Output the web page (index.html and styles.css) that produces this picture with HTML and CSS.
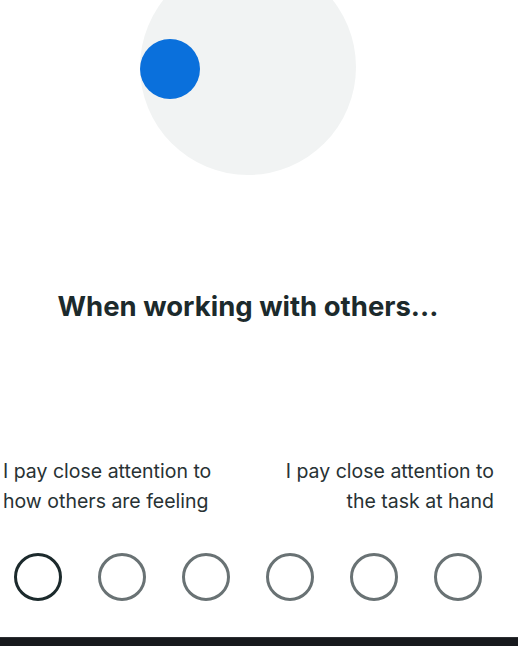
FILE: index.html
```html
<!DOCTYPE html>
<html>
<head>
  <title>Working style</title>
  <link rel="stylesheet" href="styles.css">
</head>
<body>
  <div class="screen">
    <!-- progress illustration -->
    <div class="hero">
      <div class="ring">
        <div class="dot"></div>
      </div>
    </div>

    <h1 class="question">When working with others...</h1>

    <div class="labels">
      <p class="label label-left">I pay close attention to<br>how others are feeling</p>
      <p class="label label-right">I pay close attention to<br>the task at hand</p>
    </div>

    <div class="scale">
      <button class="choice active"></button>
      <button class="choice"></button>
      <button class="choice"></button>
      <button class="choice"></button>
      <button class="choice"></button>
      <button class="choice"></button>
    </div>
  </div>
  <div class="navbar"></div>
</body>
</html>
```
FILE: styles.css
```css
html, body {
  margin: 0;
  padding: 0;
}

body {
  width: 518px;
  height: 646px;
  overflow: hidden;
  background: #fff;
  font-family: Inter, "Noto Sans", sans-serif;
  color: #1c2a2c;
}

.screen {
  width: 496px;
  height: 637px;
  display: flex;
  flex-direction: column;
  overflow: hidden;
}

/* Top circle with the blue marker */
.hero {
  height: 176px;
  display: flex;
  justify-content: center;
}

.ring {
  width: 216px;
  height: 216px;
  margin-top: -41px;
  border-radius: 50%;
  background-color: #f1f3f3;
  display: flex;
  align-items: center;
}

.dot {
  width: 60px;
  height: 60px;
  margin-top: 4px;
  border-radius: 50%;
  background-color: #0a70dc;
}

.question {
  margin: 113px 0 0;
  font-size: 27.5px;
  font-weight: 700;
  line-height: 34px;
  text-align: center;
}

/* Ends of the scale */
.labels {
  margin-top: 133px;
  display: flex;
  justify-content: space-between;
  padding: 0 2px 0 3px;
}

.label {
  margin: 0;
  font-size: 19.5px;
  line-height: 30px;
  color: #283234;
}

.label-right {
  text-align: right;
}

.scale {
  margin-top: 37px;
  display: flex;
  justify-content: center;
  gap: 36px;
}

.choice {
  width: 48px;
  height: 48px;
  padding: 0;
  border: 3px solid #697274;
  border-radius: 50%;
  background: #fff;
  cursor: pointer;
}

.choice.active {
  border-color: #1c2a2c;
}

.navbar {
  height: 9px;
  background-color: #17191d;
  border-top: 1px solid #2c2e32;
  box-sizing: border-box;
}
```
